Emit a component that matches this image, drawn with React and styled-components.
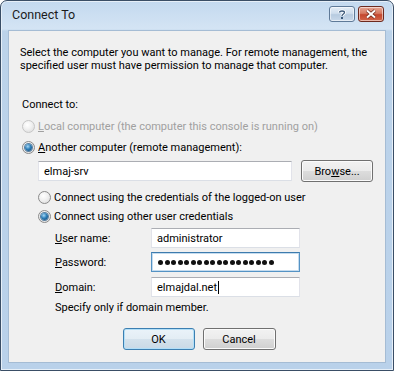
import React from "react";
import styled, { createGlobalStyle, css } from "styled-components";

const Global = createGlobalStyle`
  html, body {
    margin: 0;
    padding: 0;
    background: #ffffff;
  }
  body {
    font-family: Roboto, "Liberation Sans", sans-serif;
    font-size: 11px;
    color: #000;
  }
`;

const Frame = styled.div`
  width: 394px;
  height: 371px;
  box-sizing: border-box;
  display: flex;
  flex-direction: column;
  border: 1px solid #3a4e66;
  border-radius: 7px 7px 0 0;
  background: linear-gradient(#c3d9ef 0px, #d4e4f4 28px, #bcd3ea 30px, #b9d1ea 100%);
  padding: 0 7px 7px 7px;
  box-shadow: inset 0 0 0 1px #e6eff8;
`;

const TitleBar = styled.div`
  height: 29px;
  display: flex;
  align-items: center;
  justify-content: space-between;
  padding: 0 2px 0 4px;
`;

const Title = styled.div`
  font-size: 12.5px;
  color: #1b1b1b;
  margin-top: -2px;
`;

const Caption = styled.div`
  display: flex;
  gap: 3px;
  margin-top: -3px;
`;

const CapButton = styled.div`
  width: 26px;
  height: 16px;
  box-sizing: border-box;
  border: 1px solid ${(p) => (p.$close ? "#6d2a1f" : "#5f7a98")};
  border-radius: 3px;
  display: flex;
  align-items: center;
  justify-content: center;
  box-shadow: inset 0 0 0 1px rgba(255, 255, 255, 0.55);
  background: ${(p) =>
    p.$close
      ? "linear-gradient(#e5a694 0%, #d77a62 45%, #c4472f 55%, #d3664a 100%)"
      : "linear-gradient(#e4edf6 0%, #cfdeed 45%, #b7cbe0 55%, #c9d9ea 100%)"};
`;

const Client = styled.div`
  flex: 1;
  background: #f0f0f0;
  border: 1px solid #a5bcd4;
  display: flex;
  flex-direction: column;
  padding: 15px 12px 11px 11px;
`;

const Intro = styled.p`
  margin: 0;
  line-height: 13px;
  white-space: nowrap;
`;

const Label = styled.div`
  height: 16px;
  line-height: 16px;
  margin-top: ${(p) => p.$mt || 0}px;
  padding-left: ${(p) => p.$indent || 0}px;
  color: ${(p) => (p.$disabled ? "#a0a0a0" : "#000")};
  white-space: nowrap;
`;

const RadioRow = styled.label`
  display: flex;
  align-items: center;
  gap: 3px;
  height: 16px;
  margin-top: ${(p) => p.$mt || 0}px;
  padding-left: ${(p) => p.$indent || 0}px;
  color: ${(p) => (p.$disabled ? "#a0a0a0" : "#000")};
  white-space: nowrap;
`;

const RadioDot = styled.span`
  width: 13px;
  height: 13px;
  box-sizing: border-box;
  border-radius: 50%;
  border: 1px solid ${(p) => (p.$disabled ? "#c6c6c6" : "#8a8a8a")};
  background: radial-gradient(circle at 40% 35%, #ffffff 0%, #f2f2f2 40%, #d8d8d8 100%);
  display: flex;
  align-items: center;
  justify-content: center;
  flex: none;
  ${(p) =>
    p.$checked &&
    css`
      &::after {
        content: "";
        width: 7px;
        height: 7px;
        border-radius: 50%;
        background: radial-gradient(circle at 40% 35%, #a8d8f5 0%, #2e7fb8 45%, #0d3f6e 100%);
        box-shadow: 0 0 0 1px #5a7f9f;
      }
    `}
`;

const Row = styled.div`
  display: flex;
  align-items: center;
  gap: ${(p) => p.$gap || 0}px;
  margin-top: ${(p) => p.$mt || 0}px;
  padding-left: ${(p) => p.$indent || 0}px;
`;

const TextBox = styled.div`
  width: ${(p) => p.$w}px;
  height: ${(p) => p.$h || 20}px;
  box-sizing: border-box;
  background: #ffffff;
  border: 1px solid #dbdfe6;
  border-top-color: #abadb3;
  border-left-color: #e2e3ea;
  border-right-color: #e2e3ea;
  display: flex;
  align-items: center;
  padding-left: 5px;
  ${(p) =>
    p.$focus &&
    css`
      border-color: #5593c4;
      border-top-color: #3d7bad;
      box-shadow: inset 0 0 0 1px #c5dcef;
    `}
`;

const Dots = styled.span`
  display: flex;
  gap: 1.5px;
  padding-left: 1px;
`;

const Dot = styled.span`
  width: 5px;
  height: 5px;
  border-radius: 50%;
  background: #111;
`;

const Caret = styled.span`
  display: inline-block;
  width: 1px;
  height: 13px;
  background: #000;
  margin-left: 1px;
`;

const FieldLabel = styled.div`
  width: 96px;
  flex: none;
`;

const Button = styled.div`
  width: ${(p) => p.$w}px;
  height: 22px;
  box-sizing: border-box;
  border: 1px solid ${(p) => (p.$default ? "#3c7fb1" : "#707070")};
  border-radius: 3px;
  display: flex;
  align-items: center;
  justify-content: center;
  box-shadow: inset 0 0 0 1px ${(p) => (p.$default ? "#b2dff8" : "#fbfbfb")};
  background: ${(p) =>
    p.$default
      ? "linear-gradient(#eaf3f9 0%, #e3edf4 49%, #d4e2ec 50%, #c9d9e6 100%)"
      : "linear-gradient(#f2f2f2 0%, #ebebeb 49%, #dddddd 50%, #cfcfcf 100%)"};
`;

const ButtonBar = styled.div`
  display: flex;
  justify-content: center;
  gap: 8px;
  margin-top: 12px;
  padding-left: 5px;
`;

const HelpIcon = () => (
  <svg width="10" height="11" viewBox="0 0 10 11">
    <path
      d="M2.5 3.5 C2.5 1.5 7.5 1.5 7.5 3.5 C7.5 5 5 5 5 7"
      fill="none"
      stroke="#ffffff"
      strokeWidth="3"
    />
    <path
      d="M2.5 3.5 C2.5 1.5 7.5 1.5 7.5 3.5 C7.5 5 5 5 5 7"
      fill="none"
      stroke="#3d5a7a"
      strokeWidth="1.3"
    />
    <rect x="4" y="8" width="2" height="2" fill="#3d5a7a" />
  </svg>
);

const CloseIcon = () => (
  <svg width="12" height="10" viewBox="0 0 12 10">
    <path d="M2 1.5 L10 8.5 M10 1.5 L2 8.5" stroke="#6b2418" strokeWidth="3.4" />
    <path d="M2 1.5 L10 8.5 M10 1.5 L2 8.5" stroke="#ffffff" strokeWidth="2" />
  </svg>
);

export default function App() {
  return (
    <>
      <Global />
      <Frame>
        <TitleBar>
          <Title>Connect To</Title>
          <Caption>
            <CapButton>
              <HelpIcon />
            </CapButton>
            <CapButton $close>
              <CloseIcon />
            </CapButton>
          </Caption>
        </TitleBar>
        <Client>
          <Intro>
            Select the computer you want to manage. For remote management, the
            <br />
            specified user must have permission to manage that computer.
          </Intro>
          <Label $mt={25} $indent={2}>Connect to:</Label>
          <RadioRow $mt={5} $indent={2} $disabled>
            <RadioDot $disabled />
            <span>
              <u>L</u>ocal computer (the computer this console is running on)
            </span>
          </RadioRow>
          <RadioRow $mt={5} $indent={2}>
            <RadioDot $checked />
            <span>
              <u>A</u>nother computer (remote management):
            </span>
          </RadioRow>
          <Row $mt={5} $indent={18} $gap={9}>
            <TextBox $w={254}>elmaj-srv</TextBox>
            <Button $w={72}>
              <span>
                Bro<u>w</u>se...
              </span>
            </Button>
          </Row>
          <RadioRow $mt={7} $indent={18}>
            <RadioDot />
            <span>Connect using the credentials of the logged-on user</span>
          </RadioRow>
          <RadioRow $mt={3} $indent={18}>
            <RadioDot $checked />
            <span>Connect using other user credentials</span>
          </RadioRow>
          <Row $mt={4} $indent={35}>
            <FieldLabel>
              <u>U</u>ser name:
            </FieldLabel>
            <TextBox $w={149}>administrator</TextBox>
          </Row>
          <Row $mt={4} $indent={35}>
            <FieldLabel>
              <u>P</u>assword:
            </FieldLabel>
            <TextBox $w={149} $focus>
              <Dots>
                {Array.from({ length: 18 }, (_, i) => (
                  <Dot key={i} />
                ))}
              </Dots>
            </TextBox>
          </Row>
          <Row $mt={5} $indent={35}>
            <FieldLabel>
              <u>D</u>omain:
            </FieldLabel>
            <TextBox $w={149}>
              elmajdal.net
              <Caret />
            </TextBox>
          </Row>
          <Label $mt={3} $indent={35}>Specify only if domain member.</Label>
          <ButtonBar>
            <Button $w={72} $default>
              OK
            </Button>
            <Button $w={73}>Cancel</Button>
          </ButtonBar>
        </Client>
      </Frame>
    </>
  );
}
